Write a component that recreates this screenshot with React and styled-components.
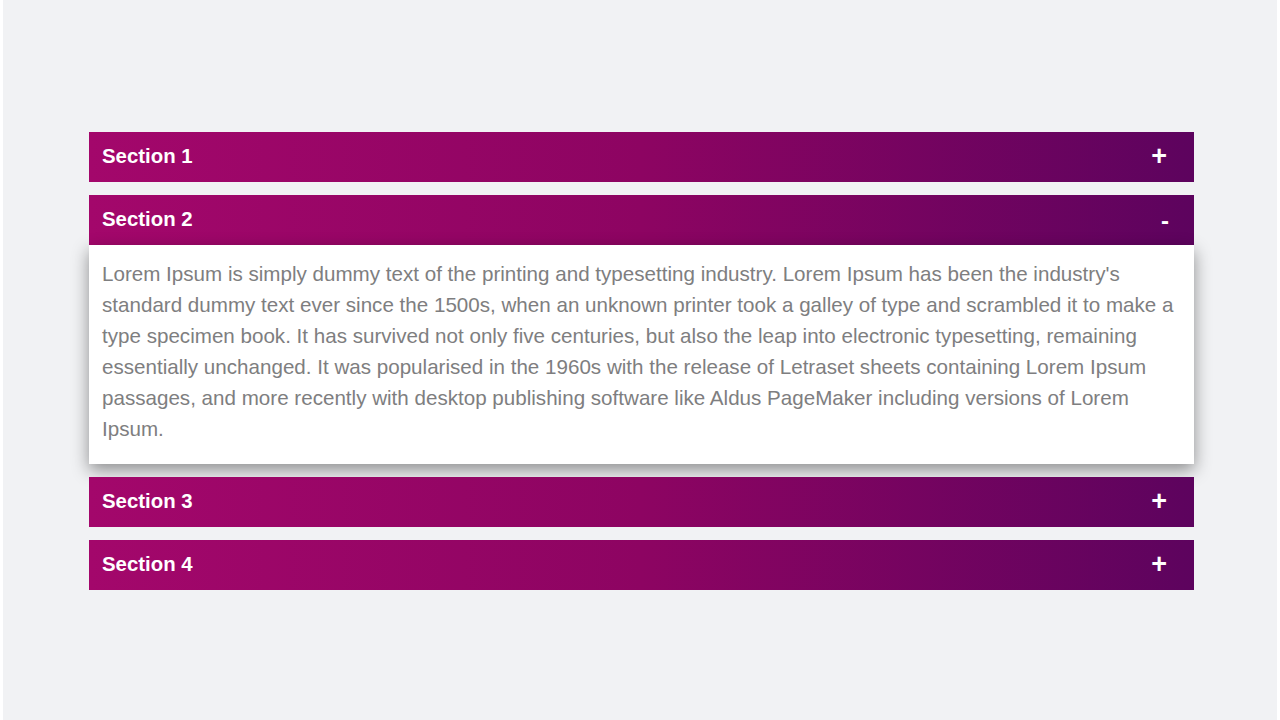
import React, { useState } from "react";
import styled, { createGlobalStyle } from "styled-components";

const Global = createGlobalStyle`
  html, body { margin: 0; padding: 0; background: #ffffff; }
  body { font-family: "Liberation Sans", Arial, sans-serif; }
  * { box-sizing: border-box; }
`;

const Page = styled.div`
  margin: 0 3px;
  min-height: 720px;
  background: #f1f2f4;
  padding: 132px 83px 0 86px;
`;

const Accordion = styled.div`
  display: flex;
  flex-direction: column;
  gap: 13px;
  width: 1105px;
`;

const Item = styled.div`
  display: flex;
  flex-direction: column;
`;

const Header = styled.button`
  display: flex;
  align-items: center;
  justify-content: space-between;
  height: 50px;
  width: 100%;
  padding: 0 27px 1px 13px;
  border: 0;
  background: linear-gradient(to right, #a3076b 0%, #8d0462 50%, #5d035e 100%);
  color: #ffffff;
  font-family: "Liberation Sans", Arial, sans-serif;
  font-weight: 700;
  font-size: 20.4px;
  cursor: pointer;
  text-align: left;
`;

const Sign = styled.span`
  font-size: ${(p) => (p.$open ? "24px" : "27px")};
  font-weight: 700;
  line-height: 1;
  margin-right: ${(p) => (p.$open ? "-2px" : "0")};
  margin-top: ${(p) => (p.$open ? "2px" : "0")};
`;

const Body = styled.div`
  background: #ffffff;
  padding: 13px 13px 20px 13px;
  box-shadow: 0 6px 16px rgba(0, 0, 0, 0.42);
`;

const Text = styled.p`
  margin: 0;
  color: #7e7e80;
  font-size: 20.6px;
  line-height: 31px;
`;

const lorem =
  "Lorem Ipsum is simply dummy text of the printing and typesetting industry. Lorem Ipsum has been the industry's standard dummy text ever since the 1500s, when an unknown printer took a galley of type and scrambled it to make a type specimen book. It has survived not only five centuries, but also the leap into electronic typesetting, remaining essentially unchanged. It was popularised in the 1960s with the release of Letraset sheets containing Lorem Ipsum passages, and more recently with desktop publishing software like Aldus PageMaker including versions of Lorem Ipsum.";

export default function App() {
  const [open, setOpen] = useState(1);
  const sections = ["Section 1", "Section 2", "Section 3", "Section 4"];
  return (
    <>
      <Global />
      <Page>
        <Accordion>
          {sections.map((s, i) => {
            const isOpen = open === i;
            return (
              <Item key={s}>
                <Header onClick={() => setOpen(isOpen ? -1 : i)}>
                  <span>{s}</span>
                  <Sign $open={isOpen}>{isOpen ? "-" : "+"}</Sign>
                </Header>
                {isOpen && (
                  <Body>
                    <Text>{lorem}</Text>
                  </Body>
                )}
              </Item>
            );
          })}
        </Accordion>
      </Page>
    </>
  );
}
